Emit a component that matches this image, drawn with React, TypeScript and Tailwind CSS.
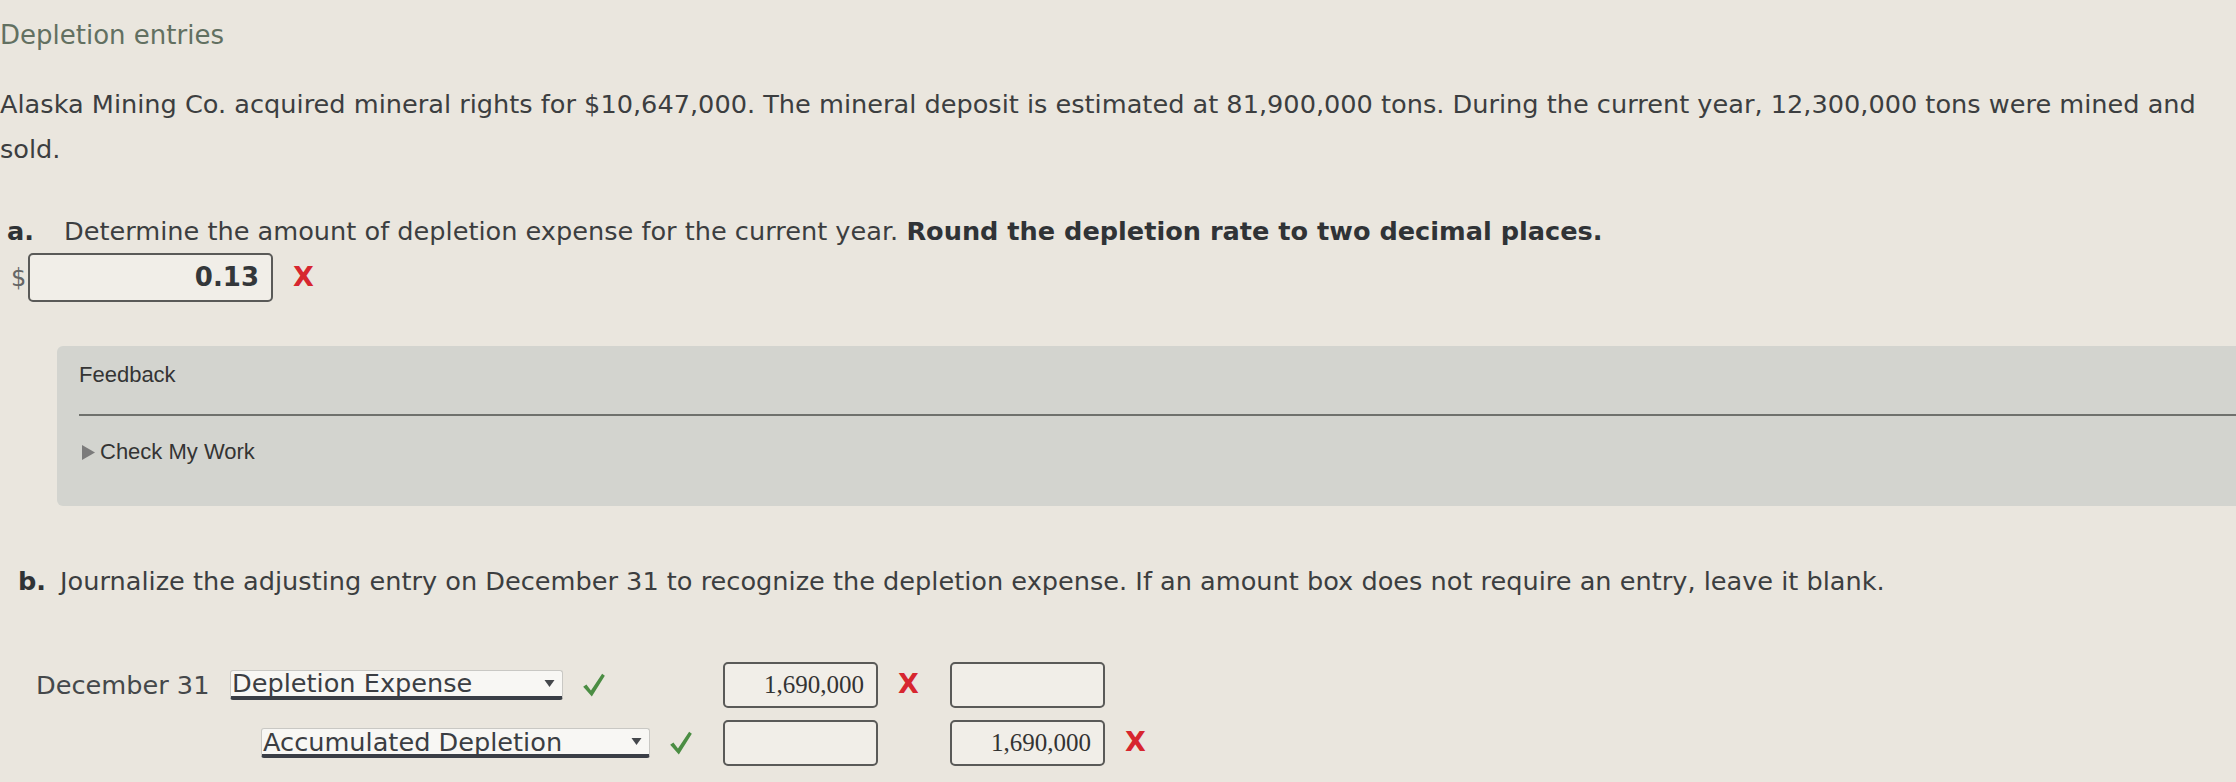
import React from 'react';

const Check = () => (
  <svg width="24" height="26" viewBox="0 0 22 24" className="shrink-0">
    <path d="M1 13.5 L4 11.5 L8.2 17 L18.5 1.5 L21 3.5 L9 22.5 Z" fill="#4b8d43" />
  </svg>
);

const Cross = () => (
  <span className="font-['DejaVu_Sans',sans-serif] text-[27px] leading-none font-bold text-[#d7262f]">X</span>
);

const Dropdown = ({ label, width }: { label: string; width: string }) => (
  <div
    className={`${width} h-[30px] flex items-center justify-between bg-[#f8f7f4] border border-[#c9c8c4] border-b-[4px] border-b-[#3a3e46] rounded-[3px] pl-[1px] pr-[7px]`}
  >
    <span className="text-[25.6px] leading-[26px] text-[#3b3e43]">{label}</span>
    <svg width="11" height="9" viewBox="0 0 11 9">
      <path d="M0.5 1 H10.5 L5.5 8 Z" fill="#45484c" />
    </svg>
  </div>
);

const AmountBox = ({ value }: { value?: string }) => (
  <div className="w-[155px] h-[46px] shrink-0 flex items-center justify-end pr-[12px] border-2 border-[#5a5a58] rounded-[5px] bg-[#f1eee8] font-['Liberation_Serif',serif] text-[25px] text-[#333]">
    {value}
  </div>
);

export default function App() {
  return (
    <div className="w-full h-[782px] overflow-hidden bg-[#eae6de] font-['DejaVu_Sans',sans-serif] text-[#3c3e40]">
      {/* Title */}
      <h1 className="pt-[19px] text-[26px] leading-[32px] text-[#627061]">Depletion entries</h1>

      {/* Problem text */}
      <p className="mt-[31px] max-w-[2215px] text-[25.6px] leading-[45px]">
        Alaska Mining Co. acquired mineral rights for $10,647,000. The mineral deposit is estimated at 81,900,000
        tons. During the current year, 12,300,000 tons were mined and sold.
      </p>

      {/* Part a */}
      <div className="mt-[42px] flex text-[25.6px] leading-[34px]">
        <span className="w-[64px] pl-[7px] font-bold text-[#2f3235]">a.</span>
        <span>
          Determine the amount of depletion expense for the current year.{' '}
          <span className="font-bold text-[#303336]">Round the depletion rate to two decimal places.</span>
        </span>
      </div>

      <div className="mt-[5px] flex items-center">
        <span className="w-[28px] pl-[11px] text-[24px] text-[#666]">$</span>
        <div className="w-[245px] h-[49px] flex items-center justify-end pr-[12px] border-2 border-[#5a5a58] rounded-[5px] bg-[#f1eee8] text-[26px] font-bold text-[#34373a]">
          0.13
        </div>
        <span className="ml-[20px]">
          <Cross />
        </span>
      </div>

      {/* Feedback panel */}
      <div className="mt-[44px] ml-[57px] h-[160px] rounded-l-[6px] bg-[#d3d4cf] pt-[17px] pl-[22px] font-['Liberation_Sans',Arial,sans-serif] text-[#343434]">
        <div className="text-[22px] leading-[24px]">Feedback</div>
        <div className="mt-[27px] border-t-2 border-[#6f716d]" />
        <div className="mt-[24px] flex items-center gap-[5px] pl-[3px] text-[22px] leading-[24px]">
          <svg width="13" height="15" viewBox="0 0 13 15">
            <path d="M0 0 L13 7.5 L0 15 Z" fill="#7b7b7b" />
          </svg>
          <span>Check My Work</span>
        </div>
      </div>

      {/* Part b */}
      <div className="mt-[58px] flex text-[25.6px] leading-[34px]">
        <span className="w-[60px] pl-[18px] font-bold text-[#2f3235]">b.</span>
        <span>
          Journalize the adjusting entry on December 31 to recognize the depletion expense. If an amount box does not
          require an entry, leave it blank.
        </span>
      </div>

      {/* Journal rows */}
      <div className="mt-[64px] flex flex-col gap-[12px]">
        <div className="flex items-center">
          <div className="w-[723px] flex items-center">
            <span className="pl-[36px] w-[230px] text-[25.6px] text-[#45484a]">December 31</span>
            <Dropdown label="Depletion Expense" width="w-[333px]" />
            <span className="ml-[19px]">
              <Check />
            </span>
          </div>
          <AmountBox value="1,690,000" />
          <div className="w-[72px] pl-[20px]">
            <Cross />
          </div>
          <AmountBox />
        </div>

        <div className="flex items-center">
          <div className="w-[723px] flex items-center pl-[261px]">
            <Dropdown label="Accumulated Depletion" width="w-[389px]" />
            <span className="ml-[19px]">
              <Check />
            </span>
          </div>
          <AmountBox />
          <div className="w-[72px]" />
          <AmountBox value="1,690,000" />
          <span className="ml-[20px]">
            <Cross />
          </span>
        </div>
      </div>
    </div>
  );
}
